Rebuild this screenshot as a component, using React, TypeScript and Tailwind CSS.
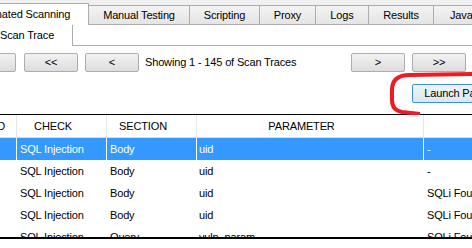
export default function App() {
  const tabs = [
    { label: "Manual Testing", w: "w-[101px]" },
    { label: "Scripting", w: "w-[70px]" },
    { label: "Proxy", w: "w-[56px]" },
    { label: "Logs", w: "w-[53px]" },
    { label: "Results", w: "w-[65px]" },
  ];

  const rows = [
    { check: "SQL Injection", section: "Body", param: "uid", result: "-", selected: true },
    { check: "SQL Injection", section: "Body", param: "uid", result: "-" },
    { check: "SQL Injection", section: "Body", param: "uid", result: "SQLi Found" },
    { check: "SQL Injection", section: "Body", param: "uid", result: "SQLi Found" },
    { check: "SQL Injection", section: "Query", param: "vuln_param", result: "SQLi Found" },
  ];

  const btn =
    "h-[19px] w-[54px] shrink-0 rounded-[2px] border border-[#adadad] bg-gradient-to-b from-[#f2f2f2] to-[#dddddd] flex items-center justify-center";

  return (
    <div className="relative w-[472px] h-[248px] overflow-hidden bg-white text-black text-[11px] tracking-[-0.15px] font-['Liberation_Sans',Arial,sans-serif]">
      {/* main tabs */}
      <div className="h-[25px] bg-[#f0f0f0] flex items-end">
        <div className="ml-[-47px] w-[136px] h-[22px] shrink-0 bg-white border-t border-r border-[#acacac] flex items-center justify-center whitespace-nowrap pb-[1px]">
          Automated Scanning
        </div>
        {tabs.map((t) => (
          <div
            key={t.label}
            className={`${t.w} h-[20px] shrink-0 border-t border-r border-b border-[#acacac] bg-gradient-to-b from-[#f3f3f3] to-[#e4e4e4] flex items-center justify-center whitespace-nowrap`}
          >
            {t.label}
          </div>
        ))}
        <div className="w-[90px] h-[20px] shrink-0 border-t border-b border-[#acacac] bg-gradient-to-b from-[#f3f3f3] to-[#e4e4e4] flex items-center pl-[16px] whitespace-nowrap">
          JavaScript
        </div>
      </div>

      {/* sub tabs */}
      <div className="h-[21px] flex">
        <div className="w-[73px] shrink-0 border-r border-[#acacac] flex items-center whitespace-nowrap">Scan Trace</div>
        <div className="flex-1 border-b border-[#acacac]" />
      </div>

      {/* paging */}
      <div className="mt-[7px] flex items-center">
        <div className={`${btn} ml-[-38px]`} />
        <div className={`${btn} ml-[8px]`}>&lt;&lt;</div>
        <div className={`${btn} ml-[7px]`}>&lt;</div>
        <div className="ml-[6px] w-[206px] shrink-0 whitespace-nowrap">Showing 1 - 145 of Scan Traces</div>
        <div className={btn}>&gt;</div>
        <div className={`${btn} ml-[7px]`}>&gt;&gt;</div>
      </div>

      <div className="mt-[12px] flex">
        <div className="ml-[412px] w-[118px] h-[19px] shrink-0 rounded-[2px] border border-[#3c8fe0] bg-gradient-to-b from-[#eef5fb] to-[#dde7f0] flex items-center justify-center whitespace-nowrap">
          Launch Parameters
        </div>
      </div>

      {/* grid */}
      <div className="mt-[11px] h-[125px] border-t border-b-2 border-black overflow-hidden flex flex-col">
        <div className="h-[23px] shrink-0 grid grid-cols-[17px_90px_90px_227px_1fr] border-b border-[#d5dbe2] bg-white">
          <div className="flex items-center justify-end pr-[11px] whitespace-nowrap border-r border-[#e3e8ee]">ID</div>
          <div className="flex items-center justify-center pr-[17px] border-r border-[#e3e8ee]">CHECK</div>
          <div className="flex items-center justify-center pr-[17px] border-r border-[#e3e8ee]">SECTION</div>
          <div className="flex items-center justify-center pr-[17px] border-r border-[#e3e8ee]">PARAMETER</div>
          <div />
        </div>
        {rows.map((r, i) => (
          <div
            key={i}
            className={`h-[22px] shrink-0 grid grid-cols-[17px_90px_90px_227px_1fr] ${r.selected ? "bg-[#3399ff] text-white" : ""}`}
          >
            <div className="border-r border-white" />
            <div className="flex items-center pl-[3px] whitespace-nowrap border-r border-white">{r.check}</div>
            <div className="flex items-center pl-[3px] whitespace-nowrap border-r border-white">{r.section}</div>
            <div className="flex items-center pl-[2px] whitespace-nowrap border-r border-white">{r.param}</div>
            <div className="flex items-center pl-[3px] whitespace-nowrap">{r.result}</div>
          </div>
        ))}
      </div>

      {/* red annotation */}
      <svg className="absolute left-[386px] top-[70px]" width="86" height="45" viewBox="0 0 86 45">
        <path
          d="M 90 4 L 24 5 C 10 5 6 12 6 20 L 6 30 C 6 38 10 41 16 42 L 34 44"
          fill="none"
          stroke="#ed1c24"
          strokeWidth="4"
        />
      </svg>
    </div>
  );
}
